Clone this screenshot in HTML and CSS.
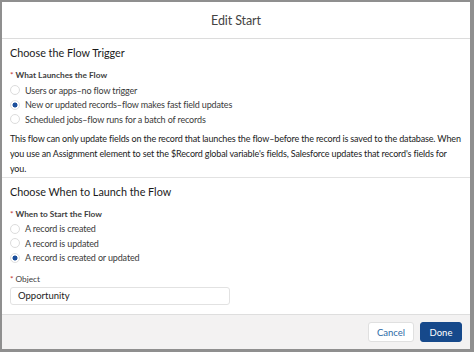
FILE: index.html
```html
<!DOCTYPE html>
<html lang="en">
<head>
    <meta charset="UTF-8">
    <title>Edit Start</title>
    <link rel="stylesheet" href="styles.css">
</head>
<body>
    <div class="modal">
        <div class="modal-header">
            <h2>Edit Start</h2>
        </div>
        <div class="modal-body">
            <div class="section">
                <h3>Choose the Flow Trigger</h3>
                <div class="field-label"><span class="req">*</span>What Launches the Flow</div>
                <div class="radio-group">
                    <label class="radio"><span class="dot"></span>Users or apps–no flow trigger</label>
                    <label class="radio"><span class="dot checked"></span>New or updated records–flow makes fast field updates</label>
                    <label class="radio"><span class="dot"></span>Scheduled jobs–flow runs for a batch of records</label>
                </div>
                <p class="help">This flow can only update fields on the record that launches the flow–before the record is saved to the database. When you use an Assignment element to set the $Record global variable's fields, Salesforce updates that record's fields for you.</p>
            </div>
            <div class="section">
                <h3>Choose When to Launch the Flow</h3>
                <div class="field-label"><span class="req">*</span>When to Start the Flow</div>
                <div class="radio-group">
                    <label class="radio"><span class="dot"></span>A record is created</label>
                    <label class="radio"><span class="dot"></span>A record is updated</label>
                    <label class="radio"><span class="dot checked"></span>A record is created or updated</label>
                </div>
                <div class="field-label plain"><span class="req">*</span>Object</div>
                <div class="input">Opportunity</div>
            </div>
        </div>
        <div class="modal-footer">
            <button class="btn">Cancel</button>
            <button class="btn brand">Done</button>
        </div>
    </div>
</body>
</html>
```

FILE: styles.css
```css
* {
    box-sizing: border-box;
}

body {
    margin: 0;
    padding: 2px 4px 3px 2px;
    height: 352px;
    background: #8f8f8f;
    font-family: Lato, "Open Sans", Arial, sans-serif;
    color: #1f1f1f;
}

.modal {
    display: flex;
    flex-direction: column;
    height: 100%;
    background: #fff;
}

.modal-header {
    height: 37px;
    display: flex;
    align-items: center;
    justify-content: center;
    border-bottom: 1px solid #dcdcdc;
    padding-top: 1px;
}

.modal-header h2 {
    margin: 0;
    font-size: 12.5px;
    font-weight: 400;
    color: #444;
    letter-spacing: -0.1px;
}

.modal-body {
    flex: 1;
}

.section {
    padding: 6px 8px 0;
}

.section + .section {
    border-top: 1px solid #e2e2e2;
    padding-top: 6px;
}

h3 {
    margin: 0 0 7px;
    font-size: 10.8px;
    font-weight: 400;
    line-height: 16px;
    color: #1a1a1a;
}

.field-label {
    font-size: 8.3px;
    font-weight: 700;
    color: #3e3e3e;
    line-height: 14px;
    margin-bottom: 1px;
}

.field-label.plain {
    font-weight: 400;
    margin-top: 7px;
    margin-bottom: 1px;
}

.req {
    color: #c23934;
    margin-right: 2px;
    font-weight: 400;
}

.radio-group {
    display: flex;
    flex-direction: column;
}

.radio {
    display: flex;
    align-items: center;
    gap: 5px;
    height: 14.5px;
    font-size: 9px;
    letter-spacing: -0.15px;
    color: #3a3a3a;
}

.dot {
    width: 10px;
    height: 10px;
    border-radius: 50%;
    border: 1px solid #dcdcdc;
    background: #fff;
    flex-shrink: 0;
}

.dot.checked {
    border-color: #e0e0e0;
    background: radial-gradient(circle, #1b4e9b 0 2.2px, #fff 2.8px);
}

.help {
    margin: 4px 0 0;
    font-size: 9px;
    letter-spacing: -0.15px;
    line-height: 15px;
    color: #222;
    padding-bottom: 1px;
}

.input {
    width: 220px;
    height: 18px;
    border: 1px solid #e2e2e2;
    border-radius: 3px;
    padding: 0 7px;
    font-size: 9.5px;
    line-height: 16px;
    color: #222;
}

.modal-footer {
    height: 35px;
    background: #f3f2f2;
    border-top: 1px solid #dedede;
    display: flex;
    align-items: center;
    justify-content: flex-end;
    gap: 6px;
    padding: 0 8px;
}

.btn {
    height: 20px;
    width: 46px;
    padding: 0;
    border: 1px solid #e0e0e0;
    border-radius: 3px;
    background: #fff;
    font-family: inherit;
    font-size: 9.5px;
    color: #2c6aa6;
}

.btn.brand {
    width: 42px;
    background: #16498b;
    border-color: #16498b;
    color: #fff;
}
```
